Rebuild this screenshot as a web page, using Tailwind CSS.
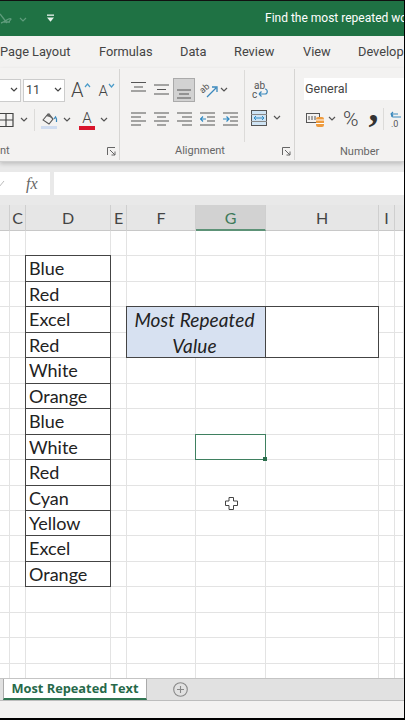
<!DOCTYPE html>
<html lang="en">
<head>
<meta charset="UTF-8">
<title>Most Repeated Text</title>
<script src="https://cdn.jsdelivr.net/npm/@tailwindcss/browser@4"></script>
</head>
<body class="bg-black overflow-hidden font-['Roboto',sans-serif]">
<div class="w-[404px] h-[718px] flex flex-col overflow-hidden bg-[#f3f2f1]">

  <!-- title bar -->
  <div class="h-[36px] shrink-0 bg-[#1f7244] border-t border-[#111] flex items-center text-white overflow-hidden">
    <svg class="w-[24px] h-[24px] ml-[-3px] shrink-0" viewBox="0 0 24 24" fill="none" stroke="#5f9c7c" stroke-width="1.3"><path d="M3 7l7 9M4 16c4-1 9-6 10-4-1 1-2 3-1 3h-6"/></svg>
    <svg class="w-[8px] h-[6px] ml-[-2px] mt-[2px] shrink-0" viewBox="0 0 8 6" fill="none" stroke="#5f9c7c" stroke-width="1.2"><path d="M1 1l3 3 3-3"/></svg>
    <svg class="w-[9px] h-[9px] ml-[19px] shrink-0" viewBox="0 0 9 9" fill="#e9f3ee"><rect x="1" y="0.5" width="7" height="1.3"/><path d="M1 3.6h7L4.5 7.8z"/></svg>
    <span class="ml-[210px] mb-[2px] shrink-0 text-[12px] whitespace-nowrap">Find the most repeated word</span>
  </div>

  <!-- tabs -->
  <div class="h-[32px] shrink-0 flex items-center text-[12.8px] text-[#444] whitespace-nowrap overflow-hidden">
    <span class="shrink-0 w-[99px]">Page Layout</span>
    <span class="shrink-0 w-[81px]">Formulas</span>
    <span class="shrink-0 w-[54px]">Data</span>
    <span class="shrink-0 w-[69px]">Review</span>
    <span class="shrink-0 w-[55px]">View</span>
    <span class="shrink-0">Develop</span>
  </div>

  <!-- ribbon -->
  <div class="h-[94px] shrink-0 flex text-[#444] border-b border-[#cfcfcf] shadow-[0_2px_4px_rgba(0,0,0,0.18)] relative">
    <!-- font group -->
    <div class="w-[120px] shrink-0 my-[1px] border-r border-[#d6d5d3] flex flex-col">
      <div class="h-[24px] mt-[9px] flex items-center">
        <div class="w-[21px] h-[23px] bg-white border border-[#ccc] border-l-0 flex items-center justify-end pr-[2px]">
          <svg class="w-[8px] h-[6px]" viewBox="0 0 8 6" fill="none" stroke="#444" stroke-width="1.2"><path d="M1 1l3 3 3-3"/></svg>
        </div>
        <div class="w-[42px] h-[23px] ml-[2px] bg-white border border-[#ccc] flex items-center text-[12.5px] pl-[2px]">
          11
          <svg class="w-[8px] h-[6px] ml-auto mr-[2px]" viewBox="0 0 8 6" fill="none" stroke="#444" stroke-width="1.2"><path d="M1 1l3 3 3-3"/></svg>
        </div>
        <span class="ml-[6px] text-[20px] leading-none font-light">A</span>
        <svg class="w-[7px] h-[5px] mb-[9px]" viewBox="0 0 7 5" fill="none" stroke="#4a9bc9" stroke-width="1.2"><path d="M1 4l2.5-3L6 4"/></svg>
        <span class="ml-[8px] text-[15px] leading-none mt-[2px] font-light">A</span>
        <svg class="w-[7px] h-[5px] mb-[9px]" viewBox="0 0 7 5" fill="none" stroke="#4a9bc9" stroke-width="1.2"><path d="M1 1l2.5 3L6 1"/></svg>
      </div>
      <div class="h-[26px] mt-[5px] flex items-center">
        <svg class="w-[14px] h-[16px]" viewBox="0 0 14 16" fill="none" stroke="#444" stroke-width="1.2"><path d="M-1 1.5h14v13H-1zM-1 8h14M6 1.5v13"/></svg>
        <svg class="w-[8px] h-[6px] ml-[6px]" viewBox="0 0 8 6" fill="none" stroke="#555" stroke-width="1.2"><path d="M1 1l3 3 3-3"/></svg>
        <div class="w-px h-[22px] ml-[6px] bg-[#dcdbd9]"></div>
        <svg class="w-[17px] h-[19px] ml-[6px]" viewBox="0 0 17 19" fill="none"><path d="M2 9l5-6 5 5-4 5z" stroke="#555" stroke-width="1.1"/><path d="M5 5l3-3 4 5z" fill="#666"/><path d="M13 8l1.5-2 1 2v3" stroke="#3b89bd" stroke-width="1.2"/><rect x="0" y="15" width="16" height="3" fill="#cfdcf0"/></svg>
        <svg class="w-[8px] h-[6px] ml-[5px]" viewBox="0 0 8 6" fill="none" stroke="#555" stroke-width="1.2"><path d="M1 1l3 3 3-3"/></svg>
        <div class="w-[16px] ml-[8px] flex flex-col items-center">
          <span class="text-[15px] leading-[15px] font-light">A</span>
          <div class="w-[16px] h-[4px] bg-[#d9142b]"></div>
        </div>
        <svg class="w-[8px] h-[6px] ml-[5px]" viewBox="0 0 8 6" fill="none" stroke="#555" stroke-width="1.2"><path d="M1 1l3 3 3-3"/></svg>
      </div>
      <div class="mt-auto h-[16px] mb-[1px] flex items-center text-[11px] text-[#666] pr-[3px]">
        <span>nt</span>
        <svg class="w-[9px] h-[9px] ml-auto" viewBox="0 0 9 9" fill="none" stroke="#666" stroke-width="1"><path d="M0.5 8V0.5H8M3 3l5 5M8 4.5V8H4.5"/></svg>
      </div>
    </div>

    <!-- alignment group -->
    <div class="w-[175px] shrink-0 my-[1px] border-r border-[#d6d5d3] flex flex-col">
      <div class="flex flex-1">
        <div class="w-[125px] border-r border-[#dcdbd9] my-[1px] flex flex-col">
          <div class="h-[24px] mt-[8px] flex items-center pl-[11px]">
            <svg class="w-[16px] h-[22px]" viewBox="0 0 16 22" fill="none" stroke="#555" stroke-width="1.2"><path d="M0 3.5h15M3 8h9M0 12h15"/></svg>
            <svg class="w-[16px] h-[22px] ml-[7px]" viewBox="0 0 16 22" fill="none" stroke="#555" stroke-width="1.2"><path d="M0 6h15M3 10.5h9M0 15h15"/></svg>
            <div class="w-[22px] h-[24px] ml-[3px] bg-[#d2d2d2] border border-[#aaa] flex items-center justify-center">
              <svg class="w-[15px] h-[22px]" viewBox="0 0 15 22" fill="none" stroke="#555" stroke-width="1.2"><path d="M0 11h14M2 15h10M0 19h14"/></svg>
            </div>
            <svg class="w-[20px] h-[20px] ml-[4px] overflow-visible" viewBox="0 0 20 20" fill="none"><text x="1" y="11" transform="rotate(-40 6 9)" font-size="9" fill="#555" font-family="Roboto">ab</text><path d="M8 17l9-9M13 7h5v5" stroke="#3b89bd" stroke-width="1.3"/></svg>
            <svg class="w-[8px] h-[6px] ml-[1px]" viewBox="0 0 8 6" fill="none" stroke="#555" stroke-width="1.2"><path d="M1 1l3 3 3-3"/></svg>
          </div>
          <div class="h-[26px] mt-[4px] flex items-center pl-[11px] gap-[7px]">
            <svg class="w-[16px] h-[16px]" viewBox="0 0 16 16" fill="none" stroke="#555" stroke-width="1.2"><path d="M0 2h15M0 6h10M0 10h15M0 14h10"/></svg>
            <svg class="w-[16px] h-[16px]" viewBox="0 0 16 16" fill="none" stroke="#555" stroke-width="1.2"><path d="M0 2h15M3 6h9M0 10h15M3 14h9"/></svg>
            <svg class="w-[16px] h-[16px]" viewBox="0 0 16 16" fill="none" stroke="#555" stroke-width="1.2"><path d="M0 2h15M5 6h10M0 10h15M5 14h10"/></svg>
            <svg class="w-[16px] h-[16px]" viewBox="0 0 16 16" fill="none" stroke-width="1.2"><path d="M0 2h15M7 6h8M7 10h8M0 14h15" stroke="#555"/><path d="M6 8H0M3 5.5L0.5 8 3 10.5" stroke="#2f8ac4"/></svg>
            <svg class="w-[16px] h-[16px]" viewBox="0 0 16 16" fill="none" stroke-width="1.2"><path d="M0 2h15M7 6h8M7 10h8M0 14h15" stroke="#555"/><path d="M0 8h6M3.5 5.5L6 8 3.5 10.5" stroke="#2f8ac4"/></svg>
          </div>
        </div>
        <div class="flex-1 flex flex-col">
          <svg class="w-[18px] h-[20px] ml-[7px] mt-[12px] overflow-visible" viewBox="0 0 18 20" fill="none"><text x="2" y="8" font-size="10" fill="#555" font-family="Roboto">ab</text><text x="0" y="17" font-size="10" fill="#555" font-family="Roboto">c</text><path d="M7 13h6c3 0 3-5 0-5M7 13l2.5-2.5M7 13l2.5 2.5" stroke="#3b89bd" stroke-width="1.2"/></svg>
          <div class="h-[20px] mt-[7px] flex items-center pl-[6px]">
            <svg class="w-[16px] h-[16px]" viewBox="0 0 16 16" fill="none"><rect x="0.5" y="0.5" width="15" height="15" fill="#cfe4f4" stroke="#555"/><path d="M0 4.5h16M0 11.5h16" stroke="#888"/><path d="M3 8h10M5 6L3 8l2 2M11 6l2 2-2 2" stroke="#2f8ac4"/></svg>
            <svg class="w-[8px] h-[6px] ml-[6px]" viewBox="0 0 8 6" fill="none" stroke="#555" stroke-width="1.2"><path d="M1 1l3 3 3-3"/></svg>
          </div>
        </div>
      </div>
      <div class="h-[16px] mb-[1px] flex items-center text-[11px] text-[#666] pr-[3px]">
        <span class="ml-[55px]">Alignment</span>
        <svg class="w-[9px] h-[9px] ml-auto" viewBox="0 0 9 9" fill="none" stroke="#666" stroke-width="1"><path d="M0.5 8V0.5H8M3 3l5 5M8 4.5V8H4.5"/></svg>
      </div>
    </div>

    <!-- number group -->
    <div class="flex-1 min-w-0 flex flex-col pl-[9px] overflow-hidden">
      <div class="h-[22px] mt-[10px] bg-white flex items-center text-[12.5px] pl-[1px]">General</div>
      <div class="h-[26px] mt-[6px] flex items-center">
        <svg class="w-[20px] h-[18px] ml-[2px] shrink-0" viewBox="0 0 20 18" fill="none"><rect x="0.5" y="3.5" width="13" height="9" stroke="#555" fill="#f3f2f1"/><path d="M3 6v4M6 6v4M9 6v4" stroke="#555"/><rect x="10" y="7" width="8" height="10" rx="2" fill="#ee9b3e"/><path d="M10 10h8M10 13.5h8" stroke="#fff"/></svg>
        <svg class="w-[8px] h-[6px] ml-[2px] shrink-0" viewBox="0 0 8 6" fill="none" stroke="#555" stroke-width="1.2"><path d="M1 1l3 3 3-3"/></svg>
        <span class="ml-[7px] text-[21px] leading-none font-light shrink-0">%</span>
        <span class="ml-[10px] w-[10px] shrink-0 text-[40px] leading-[20px] font-bold text-[#333] font-['Liberation_Serif',serif] mt-[-22px]">,</span>
        <div class="w-px h-[22px] ml-[4px] bg-[#dcdbd9] shrink-0"></div>
        <svg class="w-[12px] h-[18px] ml-[6px] shrink-0" viewBox="0 0 12 18" fill="none"><path d="M11 7H3c-2 0-2-3 0-3M1 4h7M3 2L1 4l2 2" stroke="#3b89bd" stroke-width="1.1"/><text x="1" y="17" font-size="9" fill="#555" font-family="Roboto">.0</text></svg>
      </div>
      <div class="mt-auto h-[16px] mb-[1px] flex items-center text-[11px] text-[#666]">
        <span class="ml-[36px]">Number</span>
      </div>
    </div>
  </div>

  <!-- formula bar -->
  <div class="h-[43px] shrink-0 bg-[#e9e9e9] pt-[10px] flex">
    <div class="w-[50px] h-[23px] bg-white flex items-center">
      <svg class="w-[6px] h-[8px] ml-[-1px]" viewBox="0 0 6 8" fill="none" stroke="#bbb"><path d="M0 7l5-6"/></svg>
      <span class="ml-[21px] text-[16px] italic text-[#666] font-['Liberation_Serif',serif]">fx</span>
    </div>
    <div class="flex-1 h-[23px] ml-[4px] bg-white"></div>
  </div>

  <!-- column headers -->
  <div class="h-[26px] shrink-0 bg-[#e6e6e6] border-b border-[#c8c8c8] grid grid-cols-[10px_16px_85px_16px_69px_70px_113px_16px_1fr] text-[16px] text-[#444] font-['Lato',sans-serif] leading-[25px] text-center">
    <div class="border-r border-[#cfcfcf]"></div>
    <div class="border-r border-[#cfcfcf]">C</div>
    <div class="border-r border-[#cfcfcf]">D</div>
    <div class="border-r border-[#cfcfcf]">E</div>
    <div class="border-r border-[#cfcfcf]">F</div>
    <div class="border-r border-[#cfcfcf] bg-[#d2d2d2] text-[#3e7a5a] border-b-2 border-b-[#5d9277] h-[26px]">G</div>
    <div class="border-r border-[#cfcfcf]">H</div>
    <div class="border-r border-[#cfcfcf]">I</div>
    <div></div>
  </div>

  <!-- sheet -->
  <div class="flex-1 min-h-0 overflow-hidden bg-white relative">
    <div id="sheet" class="grid grid-cols-[10px_16px_85px_16px_69px_70px_113px_16px_1fr] auto-rows-[25.46px] text-[18px] text-[#222] font-['Lato',sans-serif]">
      <div class="col-start-3 row-start-2 -ml-px -mt-px border border-[#444] pl-[3px] leading-[25px] bg-white z-10">Blue</div>
      <div class="col-start-3 row-start-3 -ml-px -mt-px border border-[#444] pl-[3px] leading-[25px] bg-white z-10">Red</div>
      <div class="col-start-3 row-start-4 -ml-px -mt-px border border-[#444] pl-[3px] leading-[25px] bg-white z-10">Excel</div>
      <div class="col-start-3 row-start-5 -ml-px -mt-px border border-[#444] pl-[3px] leading-[25px] bg-white z-10">Red</div>
      <div class="col-start-3 row-start-6 -ml-px -mt-px border border-[#444] pl-[3px] leading-[25px] bg-white z-10">White</div>
      <div class="col-start-3 row-start-7 -ml-px -mt-px border border-[#444] pl-[3px] leading-[25px] bg-white z-10">Orange</div>
      <div class="col-start-3 row-start-8 -ml-px -mt-px border border-[#444] pl-[3px] leading-[25px] bg-white z-10">Blue</div>
      <div class="col-start-3 row-start-9 -ml-px -mt-px border border-[#444] pl-[3px] leading-[25px] bg-white z-10">White</div>
      <div class="col-start-3 row-start-10 -ml-px -mt-px border border-[#444] pl-[3px] leading-[25px] bg-white z-10">Red</div>
      <div class="col-start-3 row-start-11 -ml-px -mt-px border border-[#444] pl-[3px] leading-[25px] bg-white z-10">Cyan</div>
      <div class="col-start-3 row-start-12 -ml-px -mt-px border border-[#444] pl-[3px] leading-[25px] bg-white z-10">Yellow</div>
      <div class="col-start-3 row-start-13 -ml-px -mt-px border border-[#444] pl-[3px] leading-[25px] bg-white z-10">Excel</div>
      <div class="col-start-3 row-start-14 -ml-px -mt-px border border-[#444] pl-[3px] leading-[25px] bg-white z-10">Orange</div>

      <div class="col-start-5 col-span-2 row-start-4 row-span-2 -ml-px -mt-px border border-[#444] bg-[#d7e1f1] pr-[3px] text-center text-[19px] tracking-[0.1px] italic leading-[25.5px] z-10">Most Repeated<br>Value</div>
      <div class="col-start-7 row-start-4 row-span-2 -ml-px -mt-px border border-[#444] bg-white z-10"></div>

      <div class="col-start-6 row-start-9 -ml-px -mt-px border border-[#3f8060] z-10 relative">
        <div class="absolute right-[-2px] bottom-[-2px] w-[4px] h-[4px] bg-[#2a6e4c]"></div>
      </div>
    </div>
    <svg class="absolute left-[224px] top-[265px] w-[15px] h-[15px] z-20" viewBox="0 0 15 15" fill="#fff" stroke="#444" stroke-width="1"><path d="M5 1.5h4.5v3.500H13.500v4.500H9.500V13.500H5V9.500H1.500V5H5z"/></svg>
  </div>

  <!-- sheet tabs -->
  <div class="h-[23px] shrink-0 bg-[#e1e1e1] border-t border-[#c4c4c4] border-b border-b-[#bdbdbd] flex items-start">
    <div class="ml-[3px] w-[144px] h-[21px] bg-white border-l border-r border-[#aaa] border-b-2 border-b-[#2f7552] text-[12.8px] font-bold font-['Open_Sans',sans-serif] text-[#27694a] text-center leading-[19px] whitespace-nowrap">Most Repeated Text</div>
    <svg class="ml-[26px] mt-[3px] w-[15px] h-[15px]" viewBox="0 0 15 15" fill="none" stroke="#888" stroke-width="1.1"><circle cx="7.5" cy="7.5" r="6.8"/><path d="M4 7.5h7M7.5 4v7"/></svg>
  </div>
  <div class="h-[17px] shrink-0 bg-[#f3f2f1]"></div>
</div>

<script>
  // plain gridlines behind the filled cells
  const sheet = document.getElementById('sheet');
  for (let row = 1; row <= 18; row++) {
    for (let col = 1; col <= 9; col++) {
      const cell = document.createElement('div');
      cell.className = 'border-r border-b border-[#e3e3e3]';
      cell.style.gridColumn = col;
      cell.style.gridRow = row;
      sheet.prepend(cell);
    }
  }
</script>
</body>
</html>
